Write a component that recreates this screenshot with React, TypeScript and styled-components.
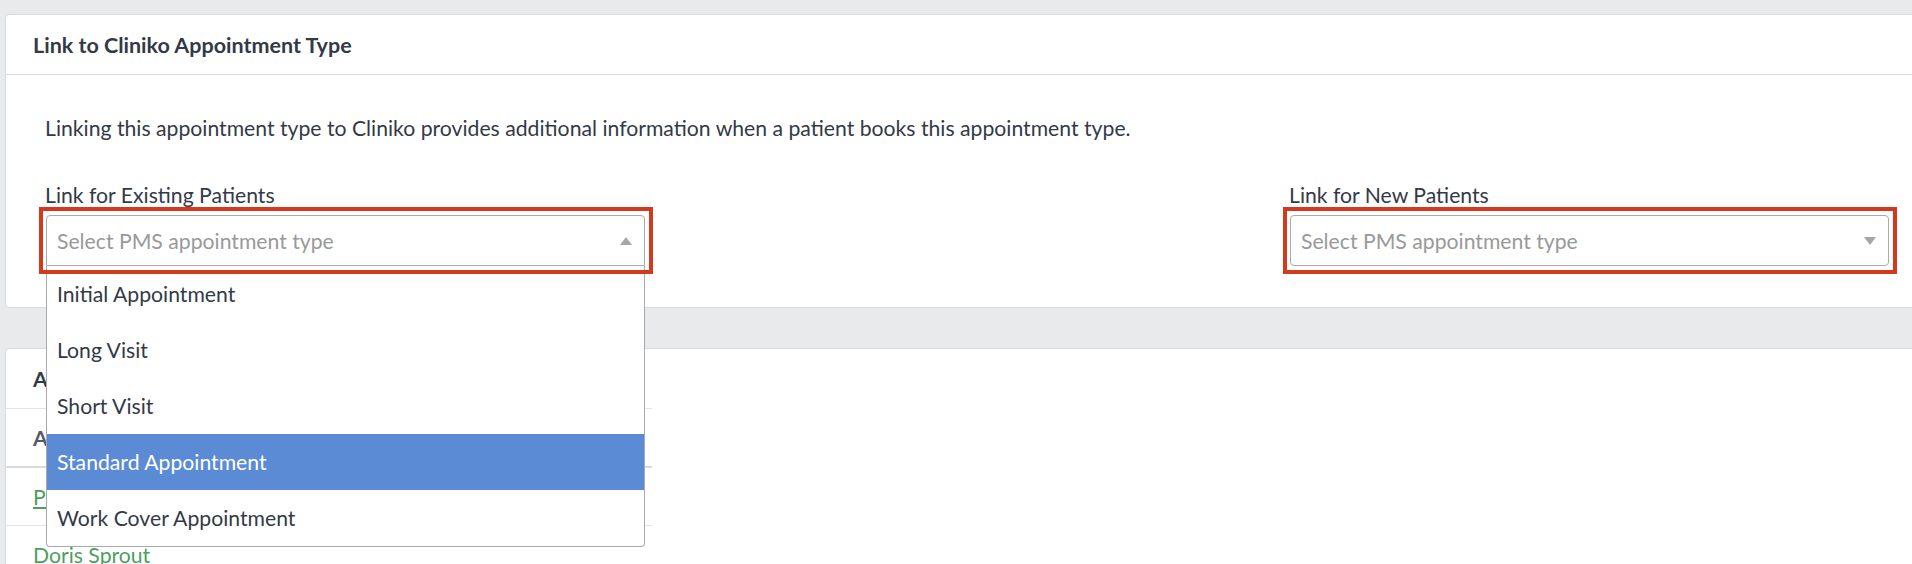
import styled, { createGlobalStyle } from "styled-components";

const GlobalStyle = createGlobalStyle`
  html, body {
    margin: 0;
    padding: 0;
    background: #e9eaec;
    overflow: hidden;
  }
  body {
    font-family: Lato, "Open Sans", Arial, sans-serif;
    color: #333a47;
  }
`;

const Page = styled.div`
  padding: 14px 0 0 5px;
  height: 564px;
  box-sizing: border-box;
`;

const Card = styled.section`
  background: #fff;
  border: 1px solid #d9dadc;
  border-radius: 4px;
  margin-right: -10px;
  & + & {
    margin-top: 40px;
  }
`;

const CardHeader = styled.div`
  height: 59px;
  display: flex;
  align-items: center;
  padding: 0 27px;
  border-bottom: 1px solid #d9dadc;
  font-size: 21.5px;
  font-weight: 700;
`;

const CardBody = styled.div`
  padding: 39px 39px 41px;
`;

const Description = styled.p`
  margin: 0 0 39px;
  font-size: 21.2px;
  line-height: 28px;
`;

const Columns = styled.div`
  display: grid;
  grid-template-columns: 1244px 1fr;
`;

const Field = styled.div`
  display: flex;
  flex-direction: column;
`;

const Label = styled.label`
  font-size: 21.2px;
  line-height: 28px;
  margin-bottom: 6px;
`;

const SelectWrap = styled.div`
  position: relative;
  width: 599px;
  margin-left: 1px;

  &::after {
    content: "";
    position: absolute;
    inset: -8px -8px -8px -7px;
    border: 4px solid #d23a1e;
    pointer-events: none;
    z-index: 3;
  }
`;

const SelectBox = styled.div<{ $open?: boolean }>`
  height: 51px;
  box-sizing: border-box;
  border: 1px solid #aaa;
  border-radius: ${(p) => (p.$open ? "4px 4px 0 0" : "4px")};
  display: flex;
  align-items: center;
  justify-content: space-between;
  padding: 0 12px 0 10px;
  font-size: 21.2px;
  color: #999;
  background: #fff;
`;

const Arrow = styled.span<{ $up?: boolean }>`
  width: 0;
  height: 0;
  border-left: 6px solid transparent;
  border-right: 6px solid transparent;
  ${(p) =>
    p.$up
      ? "border-bottom: 8px solid #a6a6a6;"
      : "border-top: 8px solid #a6a6a6;"}
`;

const Menu = styled.ul`
  position: absolute;
  top: 51px;
  left: 0;
  right: 0;
  margin: 0;
  padding: 0;
  list-style: none;
  background: #fff;
  border: 1px solid #aaa;
  border-top: none;
  border-radius: 0 0 4px 4px;
  z-index: 2;
`;

const MenuItem = styled.li<{ $active?: boolean }>`
  height: 56px;
  display: flex;
  align-items: center;
  padding: 0 10px;
  font-size: 21.2px;
  background: ${(p) => (p.$active ? "#5b8bd4" : "transparent")};
  color: ${(p) => (p.$active ? "#fff" : "#333a47")};
`;

const Table = styled.div`
  width: 646px;
`;

const TableRow = styled.div<{ $kind?: "title" | "head" | "body" }>`
  height: ${(p) => (p.$kind === "title" ? "59px" : "57px")};
  display: flex;
  align-items: center;
  padding: 0 27px;
  border-bottom: ${(p) =>
    p.$kind === "head" ? "2px solid #d9dadc" : "1px solid #e3e4e6"};
  font-size: 21.2px;
  font-weight: ${(p) => (p.$kind === "body" ? 400 : 700)};
  color: ${(p) => (p.$kind === "head" ? "#555b66" : "#333a47")};
`;

const PatientLink = styled.a<{ $underline?: boolean }>`
  color: #4c9f5e;
  text-decoration: ${(p) => (p.$underline ? "underline" : "none")};
`;

const options = [
  "Initial Appointment",
  "Long Visit",
  "Short Visit",
  "Standard Appointment",
  "Work Cover Appointment",
];

export default function App() {
  return (
    <Page>
      <GlobalStyle />
      <Card>
        <CardHeader>Link to Cliniko Appointment Type</CardHeader>
        <CardBody>
          <Description>
            Linking this appointment type to Cliniko provides additional information when a
            patient books this appointment type.
          </Description>
          <Columns>
            <Field>
              <Label>Link for Existing Patients</Label>
              <SelectWrap>
                <SelectBox $open>
                  Select PMS appointment type
                  <Arrow $up />
                </SelectBox>
                <Menu>
                  {options.map((o) => (
                    <MenuItem key={o} $active={o === "Standard Appointment"}>
                      {o}
                    </MenuItem>
                  ))}
                </Menu>
              </SelectWrap>
            </Field>
            <Field>
              <Label>Link for New Patients</Label>
              <SelectWrap>
                <SelectBox>
                  Select PMS appointment type
                  <Arrow />
                </SelectBox>
              </SelectWrap>
            </Field>
          </Columns>
        </CardBody>
      </Card>
      <Card>
        <Table>
          <TableRow $kind="title">Appointments</TableRow>
          <TableRow $kind="head">Appointment</TableRow>
          <TableRow $kind="body">
            <PatientLink href="#" $underline>
              Peter Rabbit
            </PatientLink>
          </TableRow>
          <TableRow $kind="body">
            <PatientLink href="#">Doris Sprout</PatientLink>
          </TableRow>
        </Table>
      </Card>
    </Page>
  );
}
